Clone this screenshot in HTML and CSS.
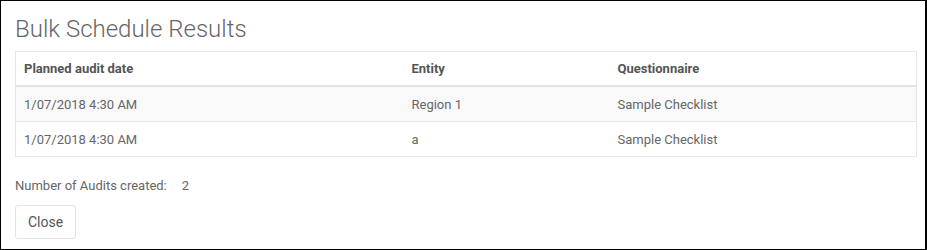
FILE: index.html
```html
<!DOCTYPE html>
<html>
<head>
<meta charset="utf-8">
<link rel="stylesheet" href="styles.css">
</head>
<body>
<div class="modal">
  <h1 class="title">Bulk Schedule Results</h1>
  <table class="results">
    <colgroup>
      <col class="c1"><col class="c2"><col class="c3">
    </colgroup>
    <thead>
      <tr><th>Planned audit date</th><th>Entity</th><th>Questionnaire</th></tr>
    </thead>
    <tbody>
      <tr class="odd"><td>1/07/2018 4:30 AM</td><td>Region 1</td><td>Sample Checklist</td></tr>
      <tr><td>1/07/2018 4:30 AM</td><td>a</td><td>Sample Checklist</td></tr>
    </tbody>
  </table>
  <div class="summary"><span class="label">Number of Audits created:</span><span class="count">2</span></div>
  <button class="btn">Close</button>
</div>
</body>
</html>
```
FILE: styles.css
```css
html, body { margin: 0; padding: 0; background: #fff; }
body { font-family: Roboto, "Liberation Sans", sans-serif; color: #666; }
.modal {
  box-sizing: border-box;
  width: 927px;
  height: 250px;
  border: 1px solid #000;
  border-right-width: 2px;
  padding: 0 0 0 14px;
}
.title {
  margin: 0;
  padding-top: 13px;
  height: 37px;
  font-size: 24px;
  font-weight: 300;
  color: #666;
  line-height: 30px;
}
.results {
  width: 901px;
  border-collapse: collapse;
  border: 1px solid #e6e6e6;
  font-size: 13px;
  table-layout: fixed;
}
.c1 { width: 388px; }
.c2 { width: 206px; }
.c3 { width: 307px; }
.results th, .results td {
  height: 34px;
  padding: 0 8px;
  text-align: left;
  vertical-align: middle;
  border-bottom: 1px solid #e6e6e6;
}
.results th { font-weight: 700; color: #555; border-bottom: 2px solid #e3e3e3; height: 33px; }
.results td { color: #666; }
.results tr.odd td { background: #f9f9f9; }
.summary {
  margin-top: 20px;
  font-size: 13px;
  color: #666;
  height: 17px;
  line-height: 17px;
}
.summary .count { margin-left: 15px; }
.btn {
  margin-top: 11px;
  box-sizing: border-box;
  width: 61px;
  height: 34px;
  background: #fff;
  border: 1px solid #e3e3e3;
  border-radius: 3px;
  font-family: Roboto, "Liberation Sans", sans-serif;
  font-size: 14px;
  color: #555;
  padding: 0;
}
```
